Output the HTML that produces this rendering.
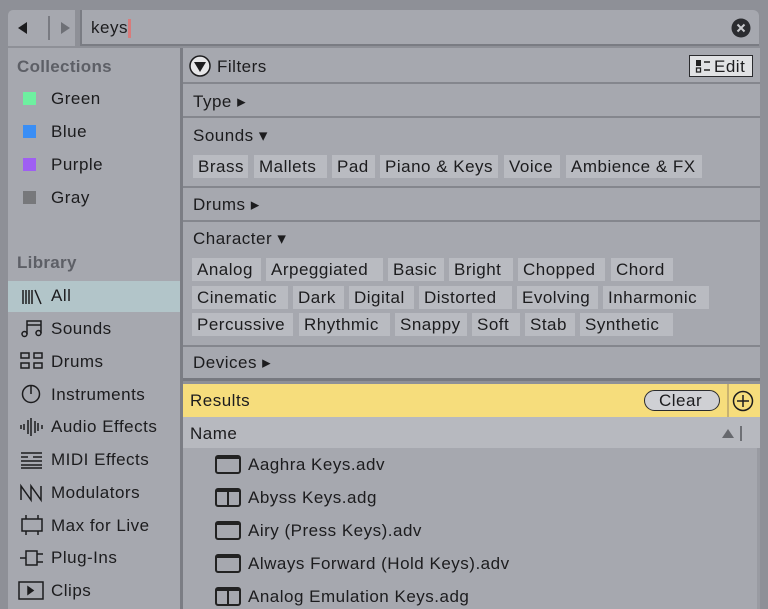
<!DOCTYPE html>
<html><head><meta charset="utf-8"><style>
*{margin:0;padding:0;box-sizing:border-box}
body{width:768px;height:609px;background:#8e9097;font-family:"Liberation Sans",sans-serif;color:#1c1c1e;position:relative;overflow:hidden;font-size:17px;letter-spacing:0.5px}
.a{position:absolute}
.panel{background:#a6a8af}
.t{position:absolute;white-space:nowrap}
.row{position:absolute;left:183px;width:577px;background:#a6a8af;border-bottom:2px solid #84868d}
.lbl{position:absolute;left:10px;white-space:nowrap}
.tag{position:absolute;background:#b9bbc1;height:23px;line-height:23px;padding-left:5px;white-space:nowrap;letter-spacing:0.5px;overflow:hidden}
.side{position:absolute;left:20px;white-space:nowrap}
.res{position:absolute;left:248px;white-space:nowrap}
.fi{position:absolute;left:215px;width:26px;height:19px;border:2px solid #222;border-radius:3px}
</style></head><body>
<div class="a panel" style="left:8px;top:10px;width:67px;height:36px;border-radius:5px 0 0 0"></div>
<svg class="a" style="left:8px;top:10px" width="67" height="36"><path d="M19 12V24L10 18Z" fill="#1c1c1e"/><line x1="41" y1="6" x2="41" y2="30" stroke="#6a6c72" stroke-width="1.5"/><path d="M53 12V24L62 18Z" fill="#6e7076"/></svg>
<div class="a panel" style="left:80px;top:10px;width:679px;height:36px;border-radius:0 6px 0 0;border-left:2px solid #7a7c83;border-bottom:2px solid #7a7c83"></div>
<div class="t" style="left:91px;top:18px">keys</div>
<div class="a" style="left:128px;top:19px;width:3px;height:19px;background:#d87b7b"></div>
<svg class="a" style="left:731px;top:18px" width="20" height="20"><circle cx="10" cy="10" r="9.5" fill="#2b2c30"/><path d="M6.5 6.5L13.5 13.5M13.5 6.5L6.5 13.5" stroke="#c8c9cd" stroke-width="2"/></svg>
<div class="a panel" style="left:8px;top:48px;width:172px;height:561px"></div>
<div class="t" style="left:17px;top:57px;color:#5d5f66;font-weight:bold;letter-spacing:0.3px">Collections</div>
<div class="a" style="left:23px;top:92px;width:13px;height:13px;background:#6ef0a0"></div><div class="side" style="left:51px;top:89px">Green</div>
<div class="a" style="left:23px;top:125px;width:13px;height:13px;background:#3a8ef5"></div><div class="side" style="left:51px;top:122px">Blue</div>
<div class="a" style="left:23px;top:158px;width:13px;height:13px;background:#9f5ff2"></div><div class="side" style="left:51px;top:155px">Purple</div>
<div class="a" style="left:23px;top:191px;width:13px;height:13px;background:#77787b"></div><div class="side" style="left:51px;top:188px">Gray</div>
<div class="t" style="left:17px;top:253px;color:#5d5f66;font-weight:bold;letter-spacing:0.3px">Library</div>
<div class="a" style="left:8px;top:281px;width:172px;height:31px;background:#b2c5c9"></div>
<svg class="a" style="left:20px;top:288px" width="24" height="18" stroke="#1c1c1e" stroke-width="1.5"><path d="M3 2V16M6 2V16M9 2V16M12 2V16M15 2L21 16"/></svg>
<div class="side" style="left:51px;top:286px">All</div>
<svg class="a" style="left:20px;top:318px" width="24" height="20" fill="none" stroke="#1c1c1e" stroke-width="1.5"><path d="M7 16V3H21V15M7 7H21"/><circle cx="4.5" cy="16" r="2.5"/><circle cx="18.5" cy="15" r="2.5"/></svg>
<div class="side" style="left:51px;top:319px">Sounds</div>
<svg class="a" style="left:20px;top:351px" width="24" height="20" fill="none" stroke="#1c1c1e" stroke-width="1.5"><rect x="1" y="2" width="8" height="5"/><rect x="14" y="2" width="8" height="5"/><rect x="1" y="12" width="8" height="5"/><rect x="14" y="12" width="8" height="5"/></svg>
<div class="side" style="left:51px;top:352px">Drums</div>
<svg class="a" style="left:20px;top:383px" width="24" height="22" fill="none" stroke="#1c1c1e" stroke-width="1.5"><circle cx="11" cy="11" r="8.5"/><path d="M11 3V11"/></svg>
<div class="side" style="left:51px;top:385px">Instruments</div>
<svg class="a" style="left:20px;top:416px" width="24" height="22" stroke="#1c1c1e" stroke-width="1.5"><path d="M1 9V13M4 8V14M8 4V18M11 2V20M15 5V17M18 7V15M22 9V13"/></svg>
<div class="side" style="left:51px;top:417px">Audio Effects</div>
<svg class="a" style="left:20px;top:450px" width="24" height="20" stroke="#1c1c1e" stroke-width="1.5"><path d="M1 3H22M1 7H8M13 7H22M1 11H22M1 15H22M1 18H22"/></svg>
<div class="side" style="left:51px;top:450px">MIDI Effects</div>
<svg class="a" style="left:20px;top:483px" width="24" height="20" fill="none" stroke="#1c1c1e" stroke-width="1.5"><path d="M1 17V3L11 17V3L21 17V3"/></svg>
<div class="side" style="left:51px;top:483px">Modulators</div>
<svg class="a" style="left:20px;top:514px" width="24" height="22" fill="none" stroke="#1c1c1e" stroke-width="1.5"><rect x="2" y="5" width="20" height="12"/><path d="M6 1V5M18 1V5M6 17V21M18 17V21"/></svg>
<div class="side" style="left:51px;top:516px">Max for Live</div>
<svg class="a" style="left:19px;top:547px" width="26" height="22" fill="none" stroke="#1c1c1e" stroke-width="1.5"><path d="M1 11H7"/><rect x="7" y="4" width="11" height="14"/><path d="M18 7H24M18 15H24"/></svg>
<div class="side" style="left:51px;top:548px">Plug-Ins</div>
<svg class="a" style="left:18px;top:580px" width="26" height="22" fill="none" stroke="#1c1c1e" stroke-width="1.5"><rect x="1" y="2" width="24" height="17"/><path d="M10 7V14L15 10.5Z" fill="#1c1c1e"/></svg>
<div class="side" style="left:51px;top:581px">Clips</div>
<div class="a" style="left:180px;top:48px;width:3px;height:561px;background:#7b7d84"></div>
<div class="row" style="top:48px;height:36px"></div>
<svg class="a" style="left:189px;top:55px" width="22" height="22"><circle cx="11" cy="11" r="10" fill="#e6e6e8" stroke="#1c1c1e" stroke-width="1.5"/><path d="M5 7H17L11 17Z" fill="#1c1c1e"/></svg>
<div class="t" style="left:217px;top:57px">Filters</div>
<div class="a" style="left:689px;top:55px;width:64px;height:22px;background:#e1e2e4;border:1.5px solid #2a2b2e"></div>
<svg class="a" style="left:695px;top:59px" width="16" height="15"><rect x="1" y="1" width="5" height="6" fill="#222"/><rect x="1.5" y="9" width="4" height="4" fill="none" stroke="#222" stroke-width="1.3"/><path d="M9 3H15M9 11H15" stroke="#222" stroke-width="1.5"/></svg>
<div class="t" style="left:714px;top:57px">Edit</div>
<div class="row" style="top:84px;height:34px"><div class="lbl" style="top:8px">Type ▸</div></div>
<div class="row" style="top:118px;height:70px"><div class="lbl" style="top:8px">Sounds ▾</div></div>
<div class="row" style="top:188px;height:34px"><div class="lbl" style="top:7px">Drums ▸</div></div>
<div class="row" style="top:222px;height:125px"><div class="lbl" style="top:7px">Character ▾</div></div>
<div class="row" style="top:347px;height:34px;border-bottom:3px solid #777980"><div class="lbl" style="top:6px">Devices ▸</div></div>
<div class="tag" style="left:193px;top:155px;width:55px">Brass</div>
<div class="tag" style="left:254px;top:155px;width:73px">Mallets</div>
<div class="tag" style="left:332px;top:155px;width:43px">Pad</div>
<div class="tag" style="left:380px;top:155px;width:118px">Piano &amp; Keys</div>
<div class="tag" style="left:504px;top:155px;width:56px">Voice</div>
<div class="tag" style="left:566px;top:155px;width:136px">Ambience &amp; FX</div>
<div class="tag" style="left:192px;top:258px;width:69px">Analog</div>
<div class="tag" style="left:266px;top:258px;width:117px">Arpeggiated</div>
<div class="tag" style="left:388px;top:258px;width:56px">Basic</div>
<div class="tag" style="left:449px;top:258px;width:64px">Bright</div>
<div class="tag" style="left:518px;top:258px;width:87px">Chopped</div>
<div class="tag" style="left:611px;top:258px;width:62px">Chord</div>
<div class="tag" style="left:192px;top:286px;width:96px">Cinematic</div>
<div class="tag" style="left:293px;top:286px;width:51px">Dark</div>
<div class="tag" style="left:349px;top:286px;width:65px">Digital</div>
<div class="tag" style="left:419px;top:286px;width:93px">Distorted</div>
<div class="tag" style="left:517px;top:286px;width:81px">Evolving</div>
<div class="tag" style="left:603px;top:286px;width:106px">Inharmonic</div>
<div class="tag" style="left:192px;top:313px;width:101px">Percussive</div>
<div class="tag" style="left:299px;top:313px;width:91px">Rhythmic</div>
<div class="tag" style="left:395px;top:313px;width:72px">Snappy</div>
<div class="tag" style="left:472px;top:313px;width:48px">Soft</div>
<div class="tag" style="left:525px;top:313px;width:50px">Stab</div>
<div class="tag" style="left:580px;top:313px;width:93px">Synthetic</div>
<div class="a" style="left:183px;top:384px;width:577px;height:33px;background:#f6dd7c"></div>
<div class="a" style="left:727px;top:384px;width:2px;height:33px;background:#c8b270"></div>
<div class="t" style="left:190px;top:391px">Results</div>
<div class="a" style="left:644px;top:390px;width:76px;height:21px;border:1.5px solid #2a2b2e;border-radius:11px;background:#cfd0d4"></div>
<div class="t" style="left:659px;top:391px">Clear</div>
<svg class="a" style="left:732px;top:390px" width="22" height="22"><circle cx="11" cy="11" r="9.5" fill="none" stroke="#1c1c1e" stroke-width="1.5"/><path d="M11 5V17M5 11H17" stroke="#1c1c1e" stroke-width="1.5"/></svg>
<div class="a" style="left:183px;top:417px;width:577px;height:31px;background:#b7b9bf"></div>
<div class="t" style="left:190px;top:424px">Name</div>
<svg class="a" style="left:720px;top:424px" width="24" height="18"><path d="M2 14L8 5L14 14Z" fill="#66686d"/><path d="M21 2V17" stroke="#55575c" stroke-width="1.5"/></svg>
<div class="a" style="left:183px;top:448px;width:577px;height:161px;background:#a6a8af"></div>
<div class="a" style="left:757px;top:448px;width:3px;height:161px;background:#999ba2"></div>
<div class="fi" style="top:455px;border-top-width:4px"></div><div class="res" style="top:455px">Aaghra Keys.adv</div>
<div class="fi" style="top:488px;border-top-width:4px"><div style="position:absolute;left:10px;top:0;width:2px;height:100%;background:#222"></div></div><div class="res" style="top:488px">Abyss Keys.adg</div>
<div class="fi" style="top:521px;border-top-width:4px"></div><div class="res" style="top:521px">Airy (Press Keys).adv</div>
<div class="fi" style="top:554px;border-top-width:4px"></div><div class="res" style="top:554px">Always Forward (Hold Keys).adv</div>
<div class="fi" style="top:587px;border-top-width:4px"><div style="position:absolute;left:10px;top:0;width:2px;height:100%;background:#222"></div></div><div class="res" style="top:587px">Analog Emulation Keys.adg</div>
</body></html>
